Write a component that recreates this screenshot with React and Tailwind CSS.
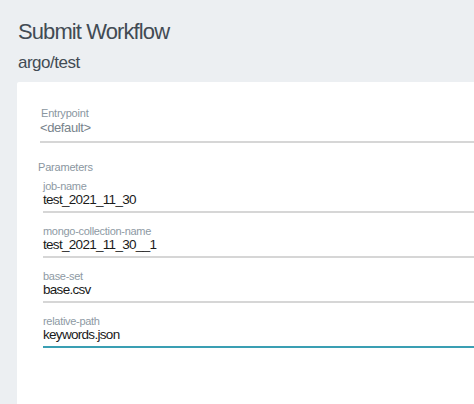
import React from 'react';

const params = [
  { name: 'job-name', value: 'test_2021_11_30' },
  { name: 'mongo-collection-name', value: 'test_2021_11_30__1' },
  { name: 'base-set', value: 'base.csv' },
  { name: 'relative-path', value: 'keywords.json', focused: true },
];

function Param({ name, value, focused }) {
  return (
    <div
      className={
        'mt-[12px] pb-[4px] border-b-2 ' +
        (focused ? 'border-[#3a9fb3]' : 'border-[#d6d6d6]')
      }
    >
      <div className="text-[11px] leading-[12px] tracking-[-0.3px] text-[#8e9aa4]">{name}</div>
      <div className="text-[13.5px] leading-[15px] tracking-[-0.7px] text-[#1a1a1a]">{value}</div>
    </div>
  );
}

export default function App() {
  return (
    <div
      className="h-screen overflow-hidden bg-[#eceff2] pl-[17px] pt-[19px] flex flex-col"
      style={{ fontFamily: '"Liberation Sans", Arial, sans-serif' }}
    >
      <h1 className="text-[22px] leading-[25px] tracking-[-0.9px] text-[#424b54] pl-px">Submit Workflow</h1>
      <h2 className="mt-[9px] text-[17px] leading-[20px] tracking-[-0.5px] text-[#424b54] pl-px">argo/test</h2>

      {/* form card */}
      <div className="mt-[9px] flex-1 bg-white rounded-tl-[2px] pt-[24px] pl-[23px]">
        <div className="pb-[6px] border-b-2 border-[#d6d6d6]">
          <div className="text-[11px] leading-[15px] tracking-[-0.2px] text-[#8a96a0] pl-px">Entrypoint</div>
          <div className="text-[13px] leading-[14px] tracking-[-0.4px] text-[#78838c]">&lt;default&gt;</div>
        </div>

        <div className="mt-[18px] text-[11px] leading-[12px] tracking-[-0.2px] text-[#8a96a0] -ml-[2px]">Parameters</div>

        <div className="pl-[3px] -mt-[5px]">
          {params.map((p) => (
            <Param key={p.name} {...p} />
          ))}
        </div>
      </div>
    </div>
  );
}
